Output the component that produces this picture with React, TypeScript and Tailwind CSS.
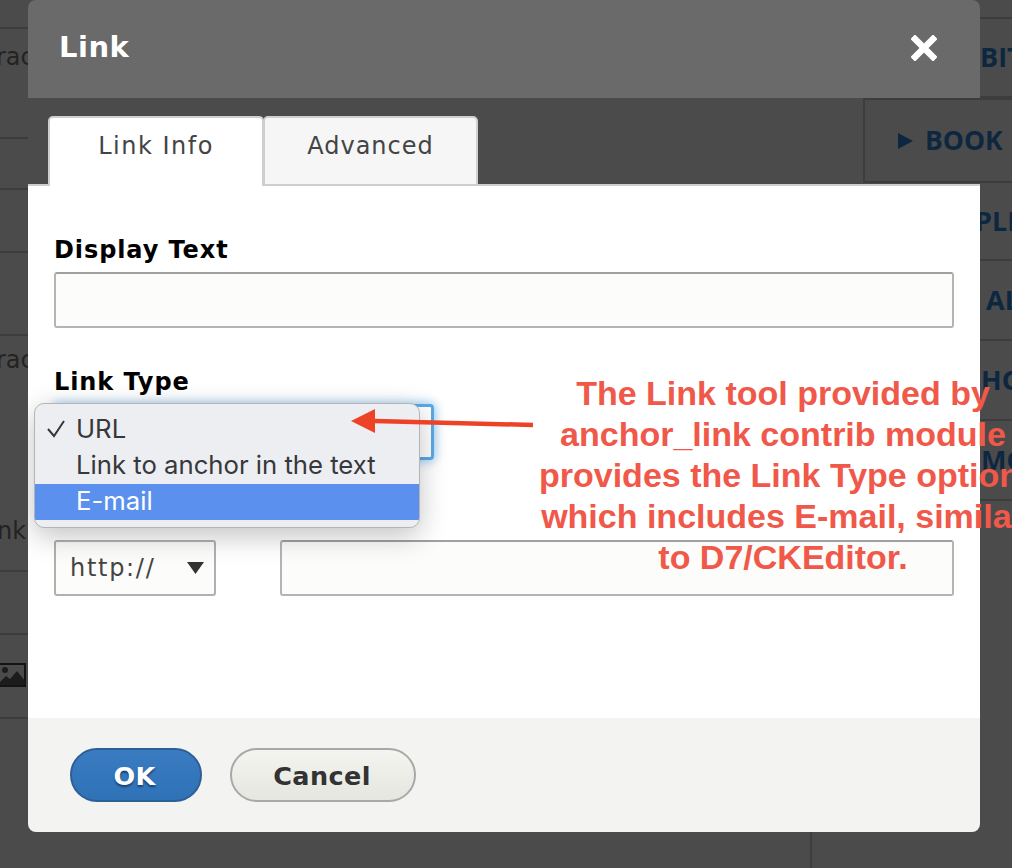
import React from "react";

function SidebarLeft() {
  return (
    <div className="w-[28px] shrink-0 flex flex-col overflow-hidden font-['DejaVu_Sans',sans-serif] text-[24px] text-[#232323]">
      <div className="h-[29px] border-b-2 border-[#3d3d3d]" />
      <div className="h-[110px] border-b-2 border-[#3d3d3d] flex items-center justify-start whitespace-nowrap">
        <span className="block -ml-[4px] -mt-[52px]">rac</span>
      </div>
      <div className="h-[51px] border-b-2 border-[#3d3d3d]" />
      <div className="h-[63px] border-b-2 border-[#3d3d3d]" />
      <div className="h-[83px] border-b-2 border-[#3d3d3d]" />
      <div className="h-[236px] border-b-2 border-[#3d3d3d] flex flex-col whitespace-nowrap">
        <span className="block -ml-[4px] mt-[6px]">rac</span>
        <span className="block -ml-[23px] mt-[135px]">Link</span>
      </div>
      <div className="h-[63px] border-b-2 border-[#3d3d3d]" />
      <div className="h-[84px] border-b-2 border-[#3d3d3d] flex items-center">
        <svg width="26" height="24" viewBox="0 0 26 24" className="block -mt-[2px]">
          <rect x="-2" y="1" width="27" height="22" fill="#4b4b4b" stroke="#141414" strokeWidth="2" />
          <circle cx="5" cy="7" r="3" fill="#1c1c1c" />
          <path d="M0 22 L0 19 L6 13 L10 16 L17 8 L25 18 L25 22 Z" fill="#1c1c1c" />
        </svg>
      </div>
    </div>
  );
}

function RightColumn() {
  const row = "border-b-2 border-[#3d3d3d] flex items-center whitespace-nowrap";
  return (
    <div className="w-[202px] shrink-0 overflow-hidden flex flex-col font-['Open_Sans',sans-serif] font-bold text-[27px] text-[#0e2740]">
      <div className="h-[19px] border-b-2 border-[#3d3d3d]" />
      <div className={`h-[79px] ${row} pl-[170px]`}>BIT</div>
      <div className="h-[85px] ml-[53px] border-2 border-r-0 border-[#3d3d3d] flex items-center pl-[33px] whitespace-nowrap text-[26.5px]">
        <svg width="15" height="16" viewBox="0 0 15 16" className="mr-[12px]">
          <path d="M0 0 L15 8 L0 16 Z" fill="#0e2740" />
        </svg>
        BOOK
      </div>
      <div className={`h-[78px] ${row} pl-[165px]`}>PLE</div>
      <div className={`h-[80px] ${row} pl-[176px]`}>AL</div>
      <div className={`h-[80px] ${row} pl-[171px]`}>HO</div>
      <div className={`h-[80px] ${row} pl-[171px]`}>MO</div>
      <div className="flex-1 border-l-2 border-[#3d3d3d]" />
    </div>
  );
}

function Tab({ active, children }: { active?: boolean; children: React.ReactNode }) {
  return (
    <div
      className={
        active
          ? "w-[216px] h-[70px] -mr-px pt-[13px] text-center bg-white border-2 border-b-0 border-[#cfcfcf] rounded-t-[5px] relative z-10 text-[#444] tracking-[1.5px]"
          : "w-[215px] h-[70px] pt-[13px] text-center bg-[#f6f6f6] border-2 border-[#cfcfcf] rounded-t-[5px] text-[#444] tracking-[1px]"
      }
    >
      {children}
    </div>
  );
}

export default function App() {
  return (
    <div className="relative w-[1012px] h-[868px] overflow-hidden bg-[#4b4b4b] flex">
      <SidebarLeft />
      <div className="flex-1" />
      <RightColumn />

      <div className="absolute left-[28px] top-0 w-[952px] h-[832px] flex flex-col rounded-b-lg overflow-hidden font-['DejaVu_Sans',sans-serif]">
        <div className="h-[98px] shrink-0 bg-[#6a6a6a] rounded-t-lg flex items-center justify-between pl-[31px] pr-[43px]">
          <span className="text-white text-[29px] font-bold tracking-[0.5px] leading-none -mt-[3px]">Link</span>
          <svg width="26" height="26" viewBox="0 0 26 26" className="-mt-[3px]">
            <path d="M4 4 L22 22 M22 4 L4 22" stroke="#fff" strokeWidth="6.5" strokeLinecap="square" fill="none" />
          </svg>
        </div>

        <div className="h-[88px] shrink-0 pt-[18px] pl-[20px] flex items-start text-[24px] leading-[30px] border-b-2 border-[#cfcfcf]">
          <Tab active>Link Info</Tab>
          <Tab>Advanced</Tab>
        </div>

        <div className="relative flex-1 bg-white px-[26px] pt-[49px]">
          <label className="block text-[24px] leading-[30px] font-bold text-black tracking-[0.9px]">Display Text</label>
          <div className="mt-[7px] h-[56px] bg-[#fcfcfa] border-2 border-[#b4b4b4] border-t-[#a0a0a0] rounded-[3px]" />

          <label className="block mt-[39px] text-[24px] leading-[30px] font-bold text-black tracking-[0.9px]">Link Type</label>
          <div className="mt-[7px] h-[56px] w-[380px] bg-white border-[3px] border-[#5aa9e8] rounded-[4px] shadow-[0_0_10px_2px_rgba(90,169,232,0.55)]" />

          <div className="mt-[80px] flex gap-[64px]">
            <div className="w-[162px] h-[56px] shrink-0 bg-[#fcfcfa] border-2 border-[#b0b0b0] rounded-[3px] flex items-center justify-between pl-[14px] pr-[10px] text-[24px] text-[#444] tracking-[1.7px]">
              <span>http://</span>
              <svg width="17" height="12" viewBox="0 0 17 12">
                <path d="M0 0 L17 0 L8.5 12 Z" fill="#333" />
              </svg>
            </div>
            <div className="flex-1 h-[56px] bg-[#fcfcfa] border-2 border-[#b4b4b4] border-t-[#a0a0a0] rounded-[3px]" />
          </div>

          <div className="absolute left-[6px] top-[217px] w-[386px] h-[125px] pt-[7px] bg-[#eceef1] rounded-[10px] border border-[#b4b4b4] shadow-[0_8px_28px_rgba(0,0,0,0.24)] font-['Inter',sans-serif] text-[25.7px] leading-[36px] text-[#36383c] overflow-hidden">
            <div className="relative h-[36px] pl-[41px]">
              <svg width="20" height="19" viewBox="0 0 20 19" className="absolute left-[11px] top-[8px]">
                <path d="M2 10 L8 17 L18 2" stroke="#36383c" strokeWidth="2" fill="none" />
              </svg>
              URL
            </div>
            <div className="h-[37px] pl-[41px] whitespace-nowrap">Link to anchor in the text</div>
            <div className="h-[36px] pl-[41px] bg-[#5b90ee] text-white leading-[34px]">E-mail</div>
          </div>
        </div>

        <div className="h-[114px] shrink-0 bg-[#f3f3f1] pl-[42px] pt-[30px] flex items-start gap-[28px] text-[25.5px] font-bold tracking-[0.4px]">
          <button className="w-[132px] h-[54px] pt-[2px] pr-[3px] rounded-[27px] bg-gradient-to-b from-[#3a7bc2] to-[#2f72b6] border-2 border-[#2c5f96] text-white [text-shadow:0_2px_2px_#17406e]">OK</button>
          <button className="w-[186px] h-[54px] pt-[2px] pr-[2px] rounded-[27px] bg-gradient-to-b from-[#f4f4f0] to-[#e6e6e0] border-2 border-[#a8a8a8] text-[#333]">Cancel</button>
        </div>
      </div>

      <svg width="190" height="32" viewBox="0 0 190 32" className="absolute left-[350px] top-[405px]">
        <path d="M25 16 L183 20" stroke="#ee4227" strokeWidth="4.5" fill="none" />
        <path d="M1 16 L25 4 L25 28 Z" fill="#ee4227" />
      </svg>

      <div className="absolute left-[503px] top-[373px] w-[560px] text-center font-['Liberation_Sans',sans-serif] font-bold text-[34px] leading-[41px] text-[#f0584a]">
        <div>The Link tool provided by</div>
        <div>anchor_link contrib module</div>
        <div className="pl-[12px]">provides the Link Type options</div>
        <div>which includes E-mail, similar</div>
        <div>to D7/CKEditor.</div>
      </div>
    </div>
  );
}
